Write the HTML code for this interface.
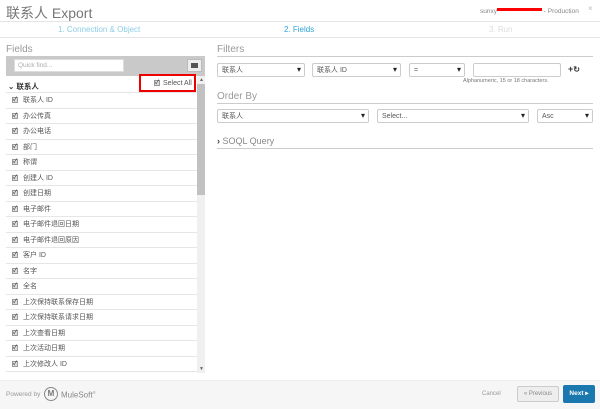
<!DOCTYPE html>
<html><head><meta charset="utf-8"><style>
*{box-sizing:border-box;margin:0;padding:0}
body{width:600px;height:409px;overflow:hidden;background:#fff;font-family:"Liberation Sans","Noto Sans CJK SC",sans-serif;color:#555;position:relative}
.a{position:absolute}
.sel{position:absolute;height:14px;border:1px solid #ccc;border-radius:2px;font-size:7px;color:#555;padding:2px 4px;background:#fff;line-height:9px}
.sel:after{content:"▾";position:absolute;right:3px;top:1px;font-size:8px;color:#222}
.row{position:absolute;left:6px;width:191px;height:15.5px;border-bottom:1px solid #e6e6e6;font-size:7px;color:#555;padding:0 0 0 6px;display:flex;align-items:center}
.cb{display:inline-block;width:6px;height:6px;border:1px solid #999;background:#ddd;margin-right:5px;font-size:6px;line-height:5px;color:#222;text-align:center;flex:none}
.h{font-size:10px;color:#999}
.line{position:absolute;height:1px;background:#ccc}
</style></head><body>
<div class="a" style="left:6px;top:3px;font-size:14px;color:#777">联系人 Export</div>
<div class="a" style="left:480px;top:8px;font-size:6.5px;color:#888">sunxy<span style="display:inline-block;width:45px;height:3px;background:#f00;vertical-align:2px"></span> - Production</div>
<div class="a" style="left:588px;top:4px;font-size:8px;color:#bbb">×</div>
<div class="line" style="left:0;top:21px;width:600px;background:#e5e5e5"></div>
<div class="line" style="left:0;top:37px;width:600px;background:#e5e5e5"></div>
<div class="a" style="left:58px;top:25px;font-size:8px;color:#8ccde8">1. Connection &amp; Object</div>
<div class="a" style="left:284px;top:25px;font-size:8px;color:#2fa4d8">2. Fields</div>
<div class="a" style="left:489px;top:25px;font-size:8px;color:#ddd">3. Run</div>

<div class="a h" style="left:6px;top:44px">Fields</div>
<div class="a" style="left:6px;top:56px;width:199px;height:20px;background:#c9c9c9"></div>
<div class="a" style="left:14px;top:59px;width:110px;height:13px;background:#fff;border:1px solid #ddd;font-size:6.5px;color:#aaa;padding:2px 3px">Quick find...</div>
<div class="a" style="left:187px;top:59px;width:15px;height:13px;background:#eee;border:1px solid #bbb"><div style="margin:3px auto;width:7px;height:5px;background:#555"></div></div>
<div class="a" style="left:6px;top:76px;width:191px;height:17px;border-bottom:1px solid #e6e6e6;font-size:7.5px;color:#333;font-weight:bold;padding:5px 2px">⌄ 联系人</div>
<div class="a" style="left:139px;top:74px;width:57px;height:18px;border:2px solid #e00;font-size:7px;color:#555;display:flex;align-items:center;padding-left:13px"><span class="cb" style="margin-right:3px">✓</span>Select All</div>
<div class="a" style="left:197px;top:76px;width:8px;height:297px;background:#f0f0f0"></div>
<div class="a" style="left:197px;top:84px;width:8px;height:111px;background:#c1c1c1"></div>
<div class="a" style="left:199px;top:77px;font-size:5px;color:#666">▲</div>
<div class="a" style="left:199px;top:366px;font-size:5px;color:#666">▼</div>
<div class="row" style="top:93px"><span class="cb">✓</span>联系人 ID</div>
<div class="row" style="top:108.5px"><span class="cb">✓</span>办公传真</div>
<div class="row" style="top:124px"><span class="cb">✓</span>办公电话</div>
<div class="row" style="top:139.5px"><span class="cb">✓</span>部门</div>
<div class="row" style="top:155px"><span class="cb">✓</span>称谓</div>
<div class="row" style="top:170.5px"><span class="cb">✓</span>创建人 ID</div>
<div class="row" style="top:186px"><span class="cb">✓</span>创建日期</div>
<div class="row" style="top:201.5px"><span class="cb">✓</span>电子邮件</div>
<div class="row" style="top:217px"><span class="cb">✓</span>电子邮件退回日期</div>
<div class="row" style="top:232.5px"><span class="cb">✓</span>电子邮件退回原因</div>
<div class="row" style="top:248px"><span class="cb">✓</span>客户 ID</div>
<div class="row" style="top:263.5px"><span class="cb">✓</span>名字</div>
<div class="row" style="top:279px"><span class="cb">✓</span>全名</div>
<div class="row" style="top:294.5px"><span class="cb">✓</span>上次保持联系保存日期</div>
<div class="row" style="top:310px"><span class="cb">✓</span>上次保持联系请求日期</div>
<div class="row" style="top:325.5px"><span class="cb">✓</span>上次查看日期</div>
<div class="row" style="top:341px"><span class="cb">✓</span>上次活动日期</div>
<div class="row" style="top:356.5px"><span class="cb">✓</span>上次修改人 ID</div>

<div class="a h" style="left:217px;top:44px">Filters</div>
<div class="line" style="left:217px;top:56px;width:376px"></div>
<div class="sel" style="left:217px;top:63px;width:88px">联系人</div>
<div class="sel" style="left:312px;top:63px;width:89px">联系人 ID</div>
<div class="sel" style="left:409px;top:63px;width:56px">=</div>
<div class="a" style="left:473px;top:63px;width:88px;height:14px;border:1px solid #ccc;border-radius:2px"></div>
<div class="a" style="left:568px;top:64px;font-size:9px;color:#333;font-weight:bold">+<span style="font-size:8px">↻</span></div>
<div class="a" style="left:463px;top:78px;font-size:5.5px;color:#777">Alphanumeric, 15 or 18 characters.</div>
<div class="a h" style="left:217px;top:91px">Order By</div>
<div class="line" style="left:217px;top:103px;width:376px"></div>
<div class="sel" style="left:217px;top:109px;width:152px">联系人</div>
<div class="sel" style="left:377px;top:109px;width:152px">Select...</div>
<div class="sel" style="left:537px;top:109px;width:56px">Asc</div>
<div class="a" style="left:217px;top:136px;font-size:9px;color:#888"><b style="color:#444">›</b> SOQL Query</div>
<div class="line" style="left:217px;top:148px;width:376px"></div>

<div class="a" style="left:0;top:380px;width:600px;height:29px;background:#f6f6f6;border-top:1px solid #eee"></div>
<div class="a" style="left:6px;top:391px;font-size:6.5px;color:#999">Powered by</div>
<div class="a" style="left:44px;top:387px;width:14px;height:14px;border:1.5px solid #888;border-radius:50%;font-size:8px;font-weight:bold;color:#777;text-align:center;line-height:11px">M</div>
<div class="a" style="left:61px;top:390px;font-size:8px;color:#888">MuleSoft<sup style="font-size:4px">®</sup></div>
<div class="a" style="left:482px;top:391px;font-size:6px;color:#999">Cancel</div>
<div class="a" style="left:517px;top:386px;width:42px;height:16px;background:#eee;border:1px solid #ccc;border-radius:2px;font-size:6px;color:#888;text-align:center;line-height:14px">« Previous</div>
<div class="a" style="left:563px;top:385px;width:32px;height:18px;background:#1a78ae;border-radius:2px;font-size:6.5px;color:#fff;text-align:center;line-height:18px;font-weight:bold">Next ▸</div>
</body></html>
